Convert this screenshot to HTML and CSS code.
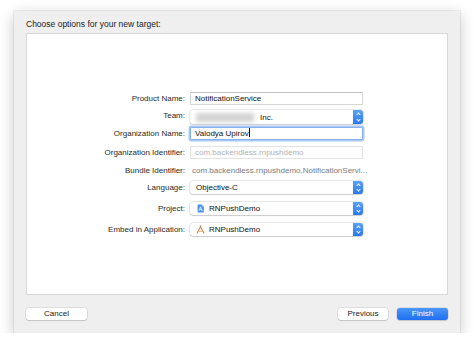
FILE: index.html
```html
<!DOCTYPE html>
<html>
<head>
    <meta charset="UTF-8">
    <link rel="stylesheet" href="styles.css">
</head>
<body>
<div class="sheet">
    <p class="title">Choose options for your new target:</p>
    <div class="pane">
        <div class="form">
            <label class="r1">Product Name:</label>
            <div class="field r1">NotificationService</div>

            <label class="r2">Team:</label>
            <div class="popup r2"><span class="blur"></span><span>Inc.</span><i class="step"></i></div>

            <label class="r3">Organization Name:</label>
            <div class="field focus r3">Valodya Upirov<span class="caret"></span></div>

            <label class="r4">Organization Identifier:</label>
            <div class="field off r4">com.backendless.rnpushdemo</div>

            <label class="r5">Bundle Identifier:</label>
            <div class="plain r5">com.backendless.rnpushdemo.NotificationServi...</div>

            <label class="r6">Language:</label>
            <div class="popup r6"><span>Objective-C</span><i class="step"></i></div>

            <label class="r7">Project:</label>
            <div class="popup r7">
                <svg class="ico" viewBox="0 0 10 11"><path d="M1.5 .5h5l2.5 2.5v7.5h-7.5z" fill="#4a90e8"/><path d="M6.5 .5v2.5h2.5" fill="#a9cdf5"/><path d="M3 8.5l2-5 2 5M3.8 6.8h2.4" stroke="#fff" stroke-width=".9" fill="none"/></svg>
                <span>RNPushDemo</span><i class="step"></i>
            </div>

            <label class="r8">Embed in Application:</label>
            <div class="popup r8">
                <svg class="ico" viewBox="0 0 10 10"><path d="M1 9.5L5 2l4 7.5" stroke="#c9925a" stroke-width="1.3" fill="none"/><path d="M2.5 7h5" stroke="#d9a56c" stroke-width="1"/><path d="M4.2 1.2l1.6 0" stroke="#8a6a4a" stroke-width="1"/></svg>
                <span>RNPushDemo</span><i class="step"></i>
            </div>
        </div>
    </div>
    <div class="buttons">
        <button class="btn">Cancel</button>
        <span class="spacer"></span>
        <button class="btn prev">Previous</button>
        <button class="btn primary">Finish</button>
    </div>
</div>
</body>
</html>
```
FILE: styles.css
```css
body{margin: 0;background: #fff;font-family: "Liberation Sans", Arial, sans-serif;font-size: 8px;color: #262626;}
p{margin: 0;}
.sheet{
    margin: 11px 0 0 14px;width: 446px;height: 322px;box-sizing: border-box;
    background: #efefef;padding: 0 12px;
    box-shadow: 0 4px 14px rgba(0,0,0,.22), 0 0 0 1px rgba(0,0,0,.05);
    display: flex;flex-direction: column;
}
.title{height: 22px;line-height: 26px;font-size: 8.5px;color: #222;}
.pane{
    height: 262px;box-sizing: border-box;background: #fff;
    border: 1px solid #d8d8d8;padding-top: 58px;
}
.form{
    display: grid;grid-template-columns: 158px 173px;column-gap: 5px;
    grid-template-rows: 17px 18px 19px 18px 17px 21px 21px 13px;
    align-items: start;
}
.form label{text-align: right;color: #2a2a2a;line-height: 13px;}
.r2,.r6,.r7,.r8{}
label.r2{line-height: 14px;}
.field{
    height: 13px;box-sizing: border-box;border: 1px solid #d6d6d6;border-top-color: #c4c4c4;
    background: #fff;padding: 0 4px;line-height: 11px;color: #111;white-space: nowrap;overflow: hidden;
}
.focus{border: 1px solid #86b3f0;box-shadow: 0 0 0 1.5px #a9c9f3;border-radius: 1px;}
.caret{display: inline-block;width: 1px;height: 9px;background: #000;vertical-align: -1px;}
.off{color: #b2b2b2;border-color: #e3e3e3;}
.plain{color: #7b7b7b;line-height: 13px;padding-left: 2px;white-space: nowrap;}
.popup{
    height: 13px;box-sizing: border-box;background: #fff;border-radius: 3px;
    box-shadow: 0 0 0 .5px rgba(0,0,0,.18), 0 1px 1px rgba(0,0,0,.12);
    display: flex;align-items: center;padding-left: 6px;color: #111;
}
.popup.r2{height: 14px;margin-top: 1px;}
.popup span{flex: none;}
.blur{width: 58px;height: 9px;background: #d3d3d3;filter: blur(2px);margin-right: 6px;}
.step{
    margin-left: auto;width: 10px;height: 100%;flex: none;
    background: linear-gradient(#5aa2f8, #2a78ee);border-radius: 0 3px 3px 0;position: relative;
}
.step::before,.step::after{
    content: "";position: absolute;left: 3.5px;width: 2px;height: 2px;
    border-left: 1px solid #fff;border-top: 1px solid #fff;
}
.step::before{top: 3px;transform: rotate(45deg);}
.step::after{bottom: 3px;transform: rotate(-135deg);}
.ico{width: 9px;height: 9px;margin-right: 4px;flex: none;}
.buttons{display: flex;align-items: center;margin-top: 13px;}
.spacer{flex: 1;}
.btn{
    font: inherit;font-size: 8px;height: 12px;padding: 0;border: 0;border-radius: 3px;
    background: #fff;color: #222;line-height: 12px;
    box-shadow: 0 0 0 .5px rgba(0,0,0,.15), 0 1px 1px rgba(0,0,0,.12);
}
.btn:first-child{width: 61px;}
.prev{width: 50px;margin-right: 9px;}
.primary{width: 51px;color: #fff;background: linear-gradient(#4a97f8, #1f6ff0);}
```
